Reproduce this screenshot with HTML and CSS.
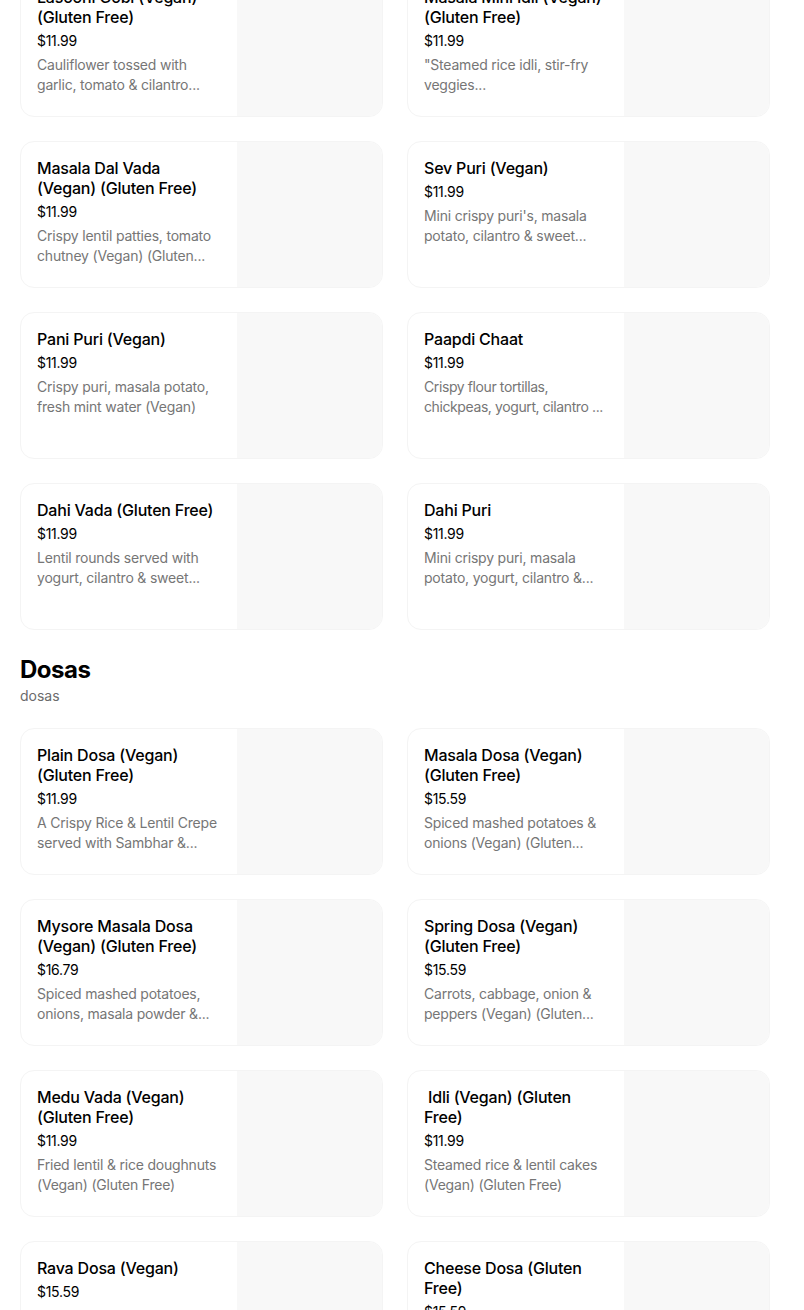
FILE: index.html
```html
<!DOCTYPE html>
<html lang="en">
<head>
    <meta charset="UTF-8">
    <title>Menu</title>
    <link rel="stylesheet" href="styles.css">
</head>
<body>
    <main class="menu">
        <section class="section section-scrolled">
            <div class="menu-grid">
                <div class="item">
                    <div class="item-info">
                        <h3 class="item-name">Lasooni Gobi (Vegan) (Gluten Free)</h3>
                        <div class="item-price">$11.99</div>
                        <p class="item-desc">Cauliflower tossed with garlic, tomato &amp; cilantro...</p>
                    </div>
                    <div class="item-photo"></div>
                </div>
                <div class="item">
                    <div class="item-info">
                        <h3 class="item-name">Masala Mini Idli (Vegan) (Gluten Free)</h3>
                        <div class="item-price">$11.99</div>
                        <p class="item-desc">"Steamed rice idli, stir-fry<br>veggies...</p>
                    </div>
                    <div class="item-photo"></div>
                </div>
                <div class="item">
                    <div class="item-info">
                        <h3 class="item-name">Masala Dal Vada (Vegan) (Gluten Free)</h3>
                        <div class="item-price">$11.99</div>
                        <p class="item-desc">Crispy lentil patties, tomato chutney (Vegan) (Gluten...</p>
                    </div>
                    <div class="item-photo"></div>
                </div>
                <div class="item">
                    <div class="item-info">
                        <h3 class="item-name">Sev Puri (Vegan)</h3>
                        <div class="item-price">$11.99</div>
                        <p class="item-desc">Mini crispy puri's, masala potato, cilantro &amp; sweet...</p>
                    </div>
                    <div class="item-photo"></div>
                </div>
                <div class="item">
                    <div class="item-info">
                        <h3 class="item-name">Pani Puri (Vegan)</h3>
                        <div class="item-price">$11.99</div>
                        <p class="item-desc">Crispy puri, masala potato, fresh mint water (Vegan)</p>
                    </div>
                    <div class="item-photo"></div>
                </div>
                <div class="item">
                    <div class="item-info">
                        <h3 class="item-name">Paapdi Chaat</h3>
                        <div class="item-price">$11.99</div>
                        <p class="item-desc item-desc-tight">Crispy flour tortillas, chickpeas, yogurt, cilantro ...</p>
                    </div>
                    <div class="item-photo"></div>
                </div>
                <div class="item">
                    <div class="item-info">
                        <h3 class="item-name">Dahi Vada (Gluten Free)</h3>
                        <div class="item-price">$11.99</div>
                        <p class="item-desc">Lentil rounds served with yogurt, cilantro &amp; sweet...</p>
                    </div>
                    <div class="item-photo"></div>
                </div>
                <div class="item">
                    <div class="item-info">
                        <h3 class="item-name">Dahi Puri</h3>
                        <div class="item-price">$11.99</div>
                        <p class="item-desc">Mini crispy puri, masala potato, yogurt, cilantro &amp;...</p>
                    </div>
                    <div class="item-photo"></div>
                </div>
            </div>
        </section>

        <section class="section">
            <h2 class="section-title">Dosas</h2>
            <p class="section-sub">dosas</p>
            <div class="menu-grid">
                <div class="item">
                    <div class="item-info">
                        <h3 class="item-name">Plain Dosa (Vegan) (Gluten Free)</h3>
                        <div class="item-price">$11.99</div>
                        <p class="item-desc">A Crispy Rice &amp; Lentil Crepe served with Sambhar &amp;...</p>
                    </div>
                    <div class="item-photo"></div>
                </div>
                <div class="item">
                    <div class="item-info">
                        <h3 class="item-name">Masala Dosa (Vegan) (Gluten Free)</h3>
                        <div class="item-price">$15.59</div>
                        <p class="item-desc">Spiced mashed potatoes &amp; onions (Vegan) (Gluten...</p>
                    </div>
                    <div class="item-photo"></div>
                </div>
                <div class="item">
                    <div class="item-info">
                        <h3 class="item-name">Mysore Masala Dosa (Vegan) (Gluten Free)</h3>
                        <div class="item-price">$16.79</div>
                        <p class="item-desc">Spiced mashed potatoes, onions, masala powder &amp;...</p>
                    </div>
                    <div class="item-photo"></div>
                </div>
                <div class="item">
                    <div class="item-info">
                        <h3 class="item-name">Spring Dosa (Vegan) (Gluten Free)</h3>
                        <div class="item-price">$15.59</div>
                        <p class="item-desc">Carrots, cabbage, onion &amp; peppers (Vegan) (Gluten...</p>
                    </div>
                    <div class="item-photo"></div>
                </div>
                <div class="item">
                    <div class="item-info">
                        <h3 class="item-name">Medu Vada (Vegan) (Gluten Free)</h3>
                        <div class="item-price">$11.99</div>
                        <p class="item-desc">Fried lentil &amp; rice doughnuts (Vegan) (Gluten Free)</p>
                    </div>
                    <div class="item-photo"></div>
                </div>
                <div class="item">
                    <div class="item-info">
                        <h3 class="item-name">&nbsp;Idli (Vegan) (Gluten Free)</h3>
                        <div class="item-price">$11.99</div>
                        <p class="item-desc">Steamed rice &amp; lentil cakes (Vegan) (Gluten Free)</p>
                    </div>
                    <div class="item-photo"></div>
                </div>
                <div class="item">
                    <div class="item-info">
                        <h3 class="item-name">Rava Dosa (Vegan)</h3>
                        <div class="item-price">$15.59</div>
                        <p class="item-desc">Wheat &amp; rice crepe with onions (Vegan)</p>
                    </div>
                    <div class="item-photo"></div>
                </div>
                <div class="item">
                    <div class="item-info">
                        <h3 class="item-name">Cheese Dosa (Gluten Free)</h3>
                        <div class="item-price">$15.59</div>
                        <p class="item-desc">Crispy crepe with melted cheese (Gluten Free)</p>
                    </div>
                    <div class="item-photo"></div>
                </div>
            </div>
        </section>
    </main>
</body>
</html>
```

FILE: styles.css
```css
body {
    margin: 0;
    font-family: Inter, "Noto Sans", Arial, sans-serif;
    color: #000;
    background-color: #fff;
    overflow: hidden;
}
.menu {
    width: 750px;
    margin-left: 20px;
}
/* page is scrolled part way into the first section */
.section-scrolled {
    margin-top: -30px;
}
.section {
    margin-bottom: 24px;
}
.section-title {
    margin: 0;
    font-size: 24px;
    line-height: 32px;
    font-weight: 700;
    letter-spacing: -0.5px;
}
.section-sub {
    margin: 0 0 22px;
    font-size: 14px;
    line-height: 20px;
    color: #6b6b6b;
}
.menu-grid {
    display: grid;
    grid-template-columns: 1fr 1fr;
    gap: 24px;
}
.item {
    display: flex;
    border: 1px solid #f4f4f4;
    border-radius: 14px;
    overflow: hidden;
    background-color: #fff;
}
.item-info {
    flex: 1;
    min-width: 0;
    padding: 16px;
}
.item-photo {
    flex: none;
    width: 145px;
    height: 145px;
    background-color: #f8f8f8;
}
.item-name {
    margin: 0 0 4px;
    font-size: 16px;
    line-height: 20px;
    font-weight: 500;
    letter-spacing: -0.2px;
}
.item-price {
    margin-bottom: 4px;
    font-size: 14px;
    line-height: 20px;
    letter-spacing: -0.3px;
}
.item-desc {
    margin: 0;
    font-size: 14px;
    line-height: 20px;
    color: #767676;
    letter-spacing: -0.2px;
    display: -webkit-box;
    -webkit-line-clamp: 2;
    -webkit-box-orient: vertical;
    overflow: hidden;
}
.item-desc-tight {
    letter-spacing: -0.4px;
}
```
